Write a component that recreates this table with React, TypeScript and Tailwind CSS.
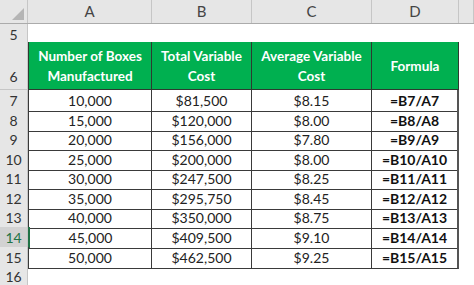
import React from "react";

const rows = [
  { n: 7, a: "10,000", b: "$81,500", c: "$8.15", d: "=B7/A7", h: "h-[20px]" },
  { n: 8, a: "15,000", b: "$120,000", c: "$8.00", d: "=B8/A8", h: "h-[19px]" },
  { n: 9, a: "20,000", b: "$156,000", c: "$7.80", d: "=B9/A9", h: "h-[20px]" },
  { n: 10, a: "25,000", b: "$200,000", c: "$8.00", d: "=B10/A10", h: "h-[19px]" },
  { n: 11, a: "30,000", b: "$247,500", c: "$8.25", d: "=B11/A11", h: "h-[20px]" },
  { n: 12, a: "35,000", b: "$295,750", c: "$8.45", d: "=B12/A12", h: "h-[19px]" },
  { n: 13, a: "40,000", b: "$350,000", c: "$8.75", d: "=B13/A13", h: "h-[20px]" },
  { n: 14, a: "45,000", b: "$409,500", c: "$9.10", d: "=B14/A14", h: "h-[20px]" },
  { n: 15, a: "50,000", b: "$462,500", c: "$9.25", d: "=B15/A15", h: "h-[19px]" },
];

const cols = "grid grid-cols-[28px_124px_100px_120px_87px_1fr]";

function RowHead({ n, active }: { n: number; active?: boolean }) {
  return (
    <div
      className={`flex items-center justify-center border-r border-b border-[#c6c6c6] ${
        active ? "bg-[#d2d2d2] text-[#217346]" : "bg-[#e6e6e6] text-[#333]"
      }`}
    >
      {n}
    </div>
  );
}

export default function App() {
  return (
    <div
      className="w-[474px] h-[285px] overflow-hidden bg-white text-[14px] text-[#222]"
      style={{ fontFamily: "Lato, 'Open Sans', sans-serif" }}
    >
      {/* column letters */}
      <div className={`${cols} h-[24px] bg-[#e6e6e6] text-[#444] text-[15px] border-b border-[#ababab]`}>
        <div className="relative border-r border-[#c6c6c6]">
          <svg className="absolute right-[3px] bottom-[3px]" width="12" height="12" viewBox="0 0 12 12">
            <polygon points="12,0 12,12 0,12" fill="#b5b5b5" />
          </svg>
        </div>
        {["A", "B", "C", "D", ""].map((l, i) => (
          <div key={i} className="flex items-center justify-center border-r border-[#c6c6c6]">
            {l}
          </div>
        ))}
      </div>

      {/* row 5 */}
      <div className={`${cols} h-[18px]`}>
        <RowHead n={5} />
        <div className="col-span-4 border-b border-[#3a3a3a]" />
        <div />
      </div>

      {/* row 6 header */}
      <div className={`${cols} h-[48px]`}>
        <div className="flex items-end justify-center pb-[2px] bg-[#e6e6e6] text-[#333] border-r border-b border-[#c6c6c6]">
          6
        </div>
        {[
          ["Number of Boxes", "Manufactured"],
          ["Total Variable", "Cost"],
          ["Average Variable", "Cost"],
          ["Formula"],
        ].map((lines, i) => (
          <div
            key={i}
            className={`flex flex-col items-center justify-center bg-[#00b050] text-white font-bold text-[13.5px] leading-[20px] border-r border-b border-[#2e3a30] ${
              i === 0 ? "border-l" : ""
            }`}
          >
            {lines.map((t) => (
              <span key={t} className="whitespace-nowrap">{t}</span>
            ))}
          </div>
        ))}
        <div />
      </div>

      {/* data */}
      {rows.map((r) => (
        <div key={r.n} className={`${cols} ${r.h}`}>
          <RowHead n={r.n} active={r.n === 14} />
          <div
            className={`flex items-center justify-center border-r border-b border-[#3a3a3a] ${
              r.n === 14 ? "border-l-2 border-l-[#217346]" : "border-l"
            }`}
          >
            {r.a}
          </div>
          <div className="flex items-center justify-center border-r border-b border-[#3a3a3a]">{r.b}</div>
          <div className="flex items-center justify-center border-r border-b border-[#3a3a3a]">{r.c}</div>
          <div className="flex items-center justify-center font-bold text-[#111] border-r-2 border-b border-[#3a3a3a] border-r-[#555]">
            {r.d}
          </div>
          <div />
        </div>
      ))}

      {/* row 16 */}
      <div className={`${cols} h-[19px]`}>
        <RowHead n={16} />
      </div>
    </div>
  );
}
